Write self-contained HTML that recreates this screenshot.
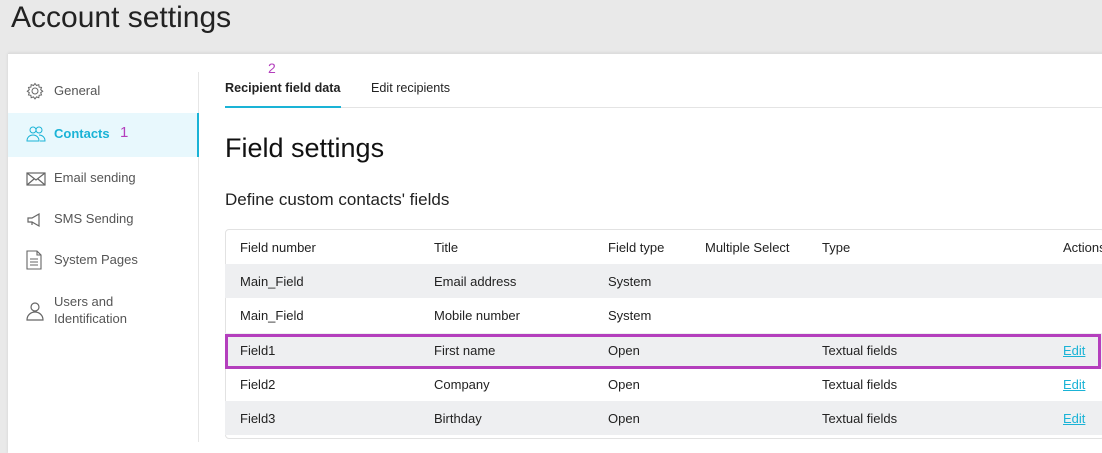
<!DOCTYPE html>
<html><head><style>
*{margin:0;padding:0;box-sizing:border-box}
body{width:1102px;height:439px;overflow:hidden;background:#e9e9e9;font-family:"Liberation Sans",sans-serif;position:relative;color:#222}
.abs{position:absolute}
h1{position:absolute;left:11px;top:1px;font-size:30px;font-weight:normal;color:#222}
.panel{position:absolute;left:8px;top:53px;width:1100px;height:400px;background:#fff;border-top:1px solid #ddd;box-shadow:0 0 3px rgba(0,0,0,.1)}
.side{position:absolute;left:8px;top:72px;width:191px;height:370px;border-right:1px solid #e6e6e6}
.item{position:absolute;left:0;width:191px;font-size:13px;color:#555}
.item span{position:absolute;left:46px}
.item svg{position:absolute;left:18px}
.row{position:absolute;left:225px;width:880px;height:34px;font-size:13px;color:#222}
.row div{position:absolute;top:10px}
.g{background:#eeeff1}
a{color:#1ab3d6;text-decoration:underline}
</style></head><body>
<h1>Account settings</h1>
<div class="panel"></div>
<div class="side">
 <div class="item" style="top:10px;height:20px"><svg width="18" height="18" viewBox="0 0 18 18" fill="none" stroke="#666" stroke-width="1"><circle cx="9" cy="9" r="3"/><path d="M9 1.5l1.5 2 2.3-.8.3 2.4 2.4.3-.8 2.3 2 1.5-2 1.5.8 2.3-2.4.3-.3 2.4-2.3-.8-1.5 2-1.5-2-2.3.8-.3-2.4-2.4-.3.8-2.3-2-1.5 2-1.5-.8-2.3 2.4-.3.3-2.4 2.3.8z"/></svg><span style="top:1px">General</span></div>
 <div class="abs" style="left:0;top:41px;width:191px;height:44px;background:#e8f8fd;border-right:2px solid #1ab3d6"></div>
 <div class="item" style="top:52px;height:20px"><svg width="20" height="20" viewBox="0 0 20 20" fill="none" stroke="#1ab3d6" stroke-width="1"><circle cx="7" cy="6" r="3"/><circle cx="13" cy="6" r="3"/><path d="M1 17c0-4 3-6 6-6s6 2 6 6zM13 11c3 0 6 2 6 6h-5"/></svg><span style="top:2px;color:#1ab3d6;font-weight:bold">Contacts</span><span style="left:112px;top:0;font-size:15px;color:#b43fbd">1</span></div>
 <div class="item" style="top:97px;height:20px"><svg width="20" height="16" viewBox="0 0 20 16" fill="none" stroke="#666" stroke-width="1.2" style="top:2px"><rect x="1" y="2" width="18" height="12"/><path d="M1 2l9 7 9-7M1 14l7-6M19 14l-7-6"/></svg><span style="top:1px">Email sending</span></div>
 <div class="item" style="top:138px;height:20px"><svg width="18" height="16" viewBox="0 0 18 16" fill="none" stroke="#666" stroke-width="1.2" style="top:2px"><path d="M2 6h4l7-4v12l-7-4H2zM6 10v3"/></svg><span style="top:1px">SMS Sending</span></div>
 <div class="item" style="top:178px;height:22px"><svg width="16" height="20" viewBox="0 0 16 20" fill="none" stroke="#666" stroke-width="1.1" style="top:0"><path d="M1 1h10l4 4v14H1zM11 1v4h4M4 9h8M4 12h8M4 15h8"/></svg><span style="top:2px">System Pages</span></div>
 <div class="item" style="top:220px;height:36px"><svg width="18" height="20" viewBox="0 0 18 20" fill="none" stroke="#666" stroke-width="1.2" style="top:9px"><circle cx="9" cy="6" r="4"/><path d="M1 19c0-5 4-8 8-8s8 3 8 8z"/></svg><span style="top:1px;line-height:17px">Users and<br>Identification</span></div>
</div>
<div class="abs" style="left:268px;top:60px;font-size:14px;color:#b43fbd">2</div>
<div class="abs" style="left:225px;top:81px;font-size:12.6px;color:#222;font-weight:bold">Recipient field data</div>
<div class="abs" style="left:371px;top:81px;font-size:12.6px;color:#222">Edit recipients</div>
<div class="abs" style="left:225px;top:107px;width:880px;height:1px;background:#e4e4e4"></div>
<div class="abs" style="left:225px;top:106px;width:116px;height:2px;background:#1ab3d6"></div>
<div class="abs" style="left:225px;top:133px;font-size:27px;color:#111">Field settings</div>
<div class="abs" style="left:225px;top:190px;font-size:17px;color:#222">Define custom contacts' fields</div>
<div class="abs" style="left:225px;top:229px;width:880px;height:210px;border:1px solid #e2e2e2;border-radius:4px"></div>
<div class="row" style="top:230px"><div style="left:15px">Field number</div><div style="left:209px">Title</div><div style="left:383px">Field type</div><div style="left:480px">Multiple Select</div><div style="left:597px">Type</div><div style="left:838px">Actions</div></div>
<div class="row g" style="top:264px"><div style="left:15px">Main_Field</div><div style="left:209px">Email address</div><div style="left:383px">System</div></div>
<div class="row" style="top:298px"><div style="left:15px">Main_Field</div><div style="left:209px">Mobile number</div><div style="left:383px">System</div></div>
<div class="row g" style="top:333px"><div style="left:15px">Field1</div><div style="left:209px">First name</div><div style="left:383px">Open</div><div style="left:597px">Textual fields</div><div style="left:838px"><a>Edit</a></div></div>
<div class="row" style="top:367px"><div style="left:15px">Field2</div><div style="left:209px">Company</div><div style="left:383px">Open</div><div style="left:597px">Textual fields</div><div style="left:838px"><a>Edit</a></div></div>
<div class="row g" style="top:401px"><div style="left:15px">Field3</div><div style="left:209px">Birthday</div><div style="left:383px">Open</div><div style="left:597px">Textual fields</div><div style="left:838px"><a>Edit</a></div></div>
<div class="abs" style="left:225px;top:334px;width:876px;height:35px;border:3px solid #b43fbd"></div>
</body></html>
